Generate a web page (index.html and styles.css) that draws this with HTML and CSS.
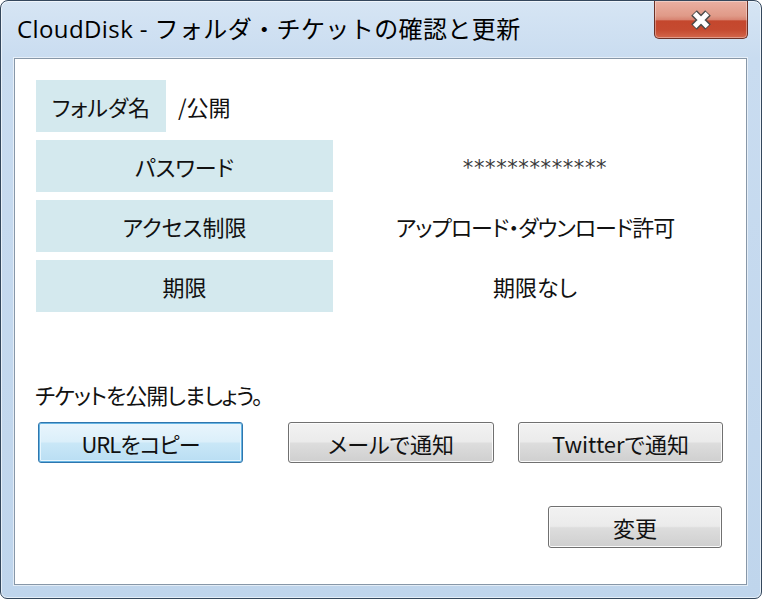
FILE: index.html
```html
<!DOCTYPE html>
<html lang="ja">
<head>
<meta charset="utf-8">
<title>CloudDisk</title>
<link rel="stylesheet" href="styles.css">
</head>
<body>
<div class="window">
  <div class="titlebar">
    <div class="title">CloudDisk - フォルダ・チケットの確認と更新</div>
    <div class="close">
      <svg class="close-x" width="26" height="22" viewBox="0 0 26 22">
        <path d="M6 4 L20 18 M20 4 L6 18" stroke="#4a4a4a" stroke-width="8" stroke-linecap="butt" fill="none"/>
        <path d="M6.6 4.6 L19.4 17.4 M19.4 4.6 L6.6 17.4" stroke="#ffffff" stroke-width="5" stroke-linecap="butt" fill="none"/>
      </svg>
    </div>
  </div>
  <div class="client">
    <div class="folder-row">
      <div class="label label-short">フォルダ名</div>
      <div class="folder-value">/公開</div>
    </div>
    <div class="table">
      <div class="label">パスワード</div>
      <div class="value pw">*************</div>
      <div class="label">アクセス制限</div>
      <div class="value tight">アップロード・ダウンロード許可</div>
      <div class="label">期限</div>
      <div class="value">期限なし</div>
    </div>
    <p class="message tight">チケットを公開しましょう。</p>
    <div class="share">
      <button class="btn btn-default btn-url">URLをコピー</button>
      <button class="btn btn-mail">メールで通知</button>
      <button class="btn btn-tw">Twitterで通知</button>
    </div>
    <div class="footer">
      <button class="btn btn-change">変更</button>
    </div>
  </div>
</div>
</body>
</html>
```

FILE: styles.css
```css
html, body {
  margin: 0;
  padding: 0;
  background: #ffffff;
}

.window {
  box-sizing: border-box;
  width: 762px;
  height: 599px;
  border: 1px solid #34475c;
  border-radius: 8px 8px 7px 7px;
  background: linear-gradient(180deg, #d6e5f4 0px, #c9dcf0 58px, #bfd5ec 100%);
  box-shadow: inset 0 0 0 1px rgba(255, 255, 255, 0.6);
  padding: 0 14px 13px 13px;
  display: flex;
  flex-direction: column;
}

.titlebar {
  height: 57px;
  flex-shrink: 0;
  display: flex;
}

.title {
  flex: 1;
  align-self: center;
  margin-left: 3px;
  margin-top: -1px;
  font-family: "Open Sans", "Noto Sans CJK JP", sans-serif;
  font-size: 24px;
  letter-spacing: 0.4px;
  line-height: 30px;
  color: #000000;
  white-space: nowrap;
}

.close {
  box-sizing: border-box;
  width: 94px;
  height: 38px;
  margin-right: -1px;
  border: 1px solid #6b3026;
  border-top: none;
  border-radius: 0 0 5px 5px;
  background: linear-gradient(180deg, #eab0a2 0%, #e09a88 40%, #d88573 50%, #c4472d 54%, #c54a30 78%, #d3674b 100%);
  box-shadow: inset 0 0 0 1px rgba(255, 255, 255, 0.35);
  display: flex;
  align-items: center;
  justify-content: center;
}

.close-x {
  display: block;
  margin-top: 1px;
}

.client {
  flex: 1;
  background: #ffffff;
  border: 1px solid #8797a8;
  box-shadow: 0 0 0 1px rgba(255, 255, 255, 0.55);
  padding: 21px 0 0 21px;
  font-family: "Noto Sans CJK JP", sans-serif;
  font-feature-settings: "palt";
  font-size: 22px;
  color: #111111;
}

.folder-row {
  display: flex;
  align-items: center;
  height: 52px;
}

.label {
  height: 52px;
  background: #d4e9ee;
  display: flex;
  align-items: center;
  justify-content: center;
}

.label-short {
  width: 130px;
}

.folder-value {
  margin-left: 12px;
}

.table {
  margin-top: 8px;
  display: grid;
  grid-template-columns: 297px 404px;
  grid-auto-rows: 52px;
  row-gap: 8px;
}

.value {
  display: flex;
  align-items: center;
  justify-content: center;
}

.tight {
  letter-spacing: -1px;
}

.pw {
  box-sizing: border-box;
  font-family: "DejaVu Sans", sans-serif;
  font-size: 21px;
  letter-spacing: 0.6px;
  padding-top: 4px;
  color: #3a3a3a;
}

.message {
  margin: 67px 0 0 -1px;
  line-height: 30px;
  height: 30px;
}

.share {
  margin-top: 13px;
  display: flex;
}

.btn {
  box-sizing: border-box;
  height: 41px;
  padding: 0;
  border: 1px solid #707070;
  border-radius: 3px;
  background: linear-gradient(180deg, #f2f2f2 0%, #ebebeb 48%, #dddddd 52%, #cfcfcf 100%);
  box-shadow: inset 0 0 0 1px #fbfbfb;
  font-family: "Noto Sans CJK JP", sans-serif;
  font-feature-settings: "palt";
  font-size: 22px;
  color: #111111;
  line-height: 1;
}

.btn-default {
  border-color: #2f76ad;
  background: linear-gradient(180deg, #e9f5fc 0%, #dbeffa 48%, #c9e7f7 52%, #b9def3 100%);
  box-shadow: inset 0 0 0 1px #66b4e3, inset 0 0 0 2px #e8f6fd;
}

.btn-url {
  width: 205px;
  margin-left: 2px;
  letter-spacing: -1px;
}

.btn-mail {
  width: 206px;
  margin-left: 45px;
}

.btn-tw {
  width: 205px;
  margin-left: 24px;
}

.footer {
  margin-top: 43px;
  display: flex;
  justify-content: flex-end;
  padding-right: 24px;
}

.btn-change {
  width: 174px;
  height: 42px;
}
```
